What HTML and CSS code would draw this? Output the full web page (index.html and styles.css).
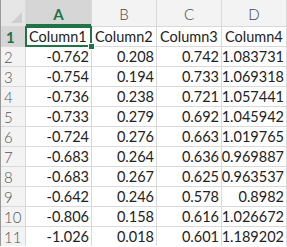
FILE: index.html
```html
<!DOCTYPE html>
<html lang="en">
<head>
    <meta charset="UTF-8">
    <title>Sheet</title>
    <link rel="stylesheet" href="styles.css">
</head>
<body>
    <div class="sheet">
        <div class="corner"><span class="tri"></span></div>
        <div class="colhead selected">A</div>
        <div class="colhead">B</div>
        <div class="colhead">C</div>
        <div class="colhead">D</div>

        <div class="rowhead selected">1</div>
        <div class="cell text active">Column1<span class="handle"></span></div>
        <div class="cell text">Column2</div>
        <div class="cell text">Column3</div>
        <div class="cell text">Column4</div>

        <div class="rowhead">2</div><div class="cell">-0.762</div><div class="cell">0.208</div><div class="cell">0.742</div><div class="cell">1.083731</div>
        <div class="rowhead">3</div><div class="cell">-0.754</div><div class="cell">0.194</div><div class="cell">0.733</div><div class="cell">1.069318</div>
        <div class="rowhead">4</div><div class="cell">-0.736</div><div class="cell">0.238</div><div class="cell">0.721</div><div class="cell">1.057441</div>
        <div class="rowhead">5</div><div class="cell">-0.733</div><div class="cell">0.279</div><div class="cell">0.692</div><div class="cell">1.045942</div>
        <div class="rowhead">6</div><div class="cell">-0.724</div><div class="cell">0.276</div><div class="cell">0.663</div><div class="cell">1.019765</div>
        <div class="rowhead">7</div><div class="cell">-0.683</div><div class="cell">0.264</div><div class="cell">0.636</div><div class="cell">0.969887</div>
        <div class="rowhead">8</div><div class="cell">-0.683</div><div class="cell">0.267</div><div class="cell">0.625</div><div class="cell">0.963537</div>
        <div class="rowhead">9</div><div class="cell">-0.642</div><div class="cell">0.246</div><div class="cell">0.578</div><div class="cell">0.8982</div>
        <div class="rowhead">10</div><div class="cell">-0.806</div><div class="cell">0.158</div><div class="cell">0.616</div><div class="cell">1.026672</div>
        <div class="rowhead">11</div><div class="cell">-1.026</div><div class="cell">0.018</div><div class="cell">0.601</div><div class="cell">1.189202</div>
    </div>
</body>
</html>
```

FILE: styles.css
```css
body {
    margin: 0;
    background-color: #ffffff;
    font-family: Lato, "Open Sans", sans-serif;
    font-size: 14.5px;
    color: #222222;
}

.sheet {
    display: grid;
    grid-template-columns: 24px 65px 64px 64px 64px;
    grid-template-rows: 26px repeat(11, 19px);
    gap: 1px;
    width: 286px;
    background-color: #d9d9d9;
    border-left: 1px solid #9a9a9a;
    border-right: 1px solid #d9d9d9;
}

.corner {
    background-color: #e6e6e6;
    position: relative;
}

/* select-all triangle */
.corner .tri {
    position: absolute;
    right: 3px;
    bottom: 3px;
    width: 0;
    height: 0;
    border-left: 11px solid transparent;
    border-bottom: 11px solid #cfcfcf;
}

.colhead {
    background-color: #f3f3f3;
    color: #444444;
    font-size: 15px;
    font-weight: 300;
    display: flex;
    align-items: center;
    justify-content: center;
    padding-top: 2px;
}

.colhead.selected {
    background-color: #d6d6d6;
    color: #217346;
    font-weight: 700;
    box-shadow: inset 0 -2px 0 #217346;
}

.rowhead {
    background-color: #f3f3f3;
    color: #555555;
    font-size: 15px;
    font-weight: 300;
    display: flex;
    align-items: flex-end;
    padding-left: 3px;
}

.rowhead.selected {
    background-color: #d6d6d6;
    color: #217346;
    font-weight: 700;
    padding-left: 5px;
}

.cell {
    background-color: #ffffff;
    display: flex;
    align-items: flex-end;
    justify-content: flex-end;
    padding: 0 2px 0 3px;
    line-height: 18px;
    white-space: nowrap;
    overflow: visible;
}

.cell.text {
    justify-content: flex-start;
}

.cell.active {
    position: relative;
    box-shadow: 0 0 0 1px #217346, inset 0 0 0 1px #217346;
    z-index: 1;
}

.handle {
    position: absolute;
    right: -4px;
    bottom: -4px;
    width: 5px;
    height: 5px;
    background-color: #217346;
    border: 1px solid #ffffff;
}
```
